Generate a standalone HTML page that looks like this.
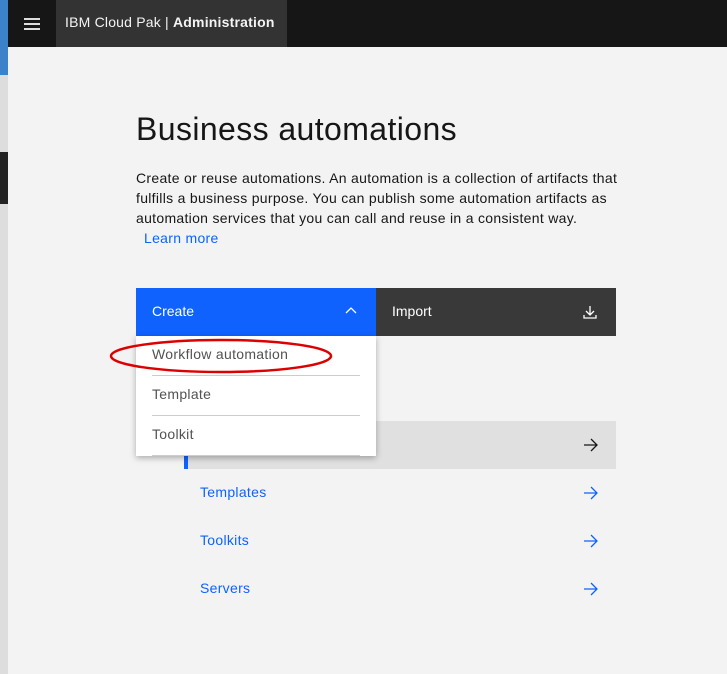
<html><head><style>
body{margin:0;width:727px;height:674px;overflow:hidden;background:#f3f3f3;font-family:"Liberation Sans",sans-serif;position:relative}
.a{position:absolute}
</style></head><body>
<div class="a" style="left:0;top:0;width:8px;height:674px;background:#ddd"></div>
<div class="a" style="left:0;top:0;width:8px;height:75px;background:#3b82c8"></div>
<div class="a" style="left:0;top:152px;width:8px;height:52px;background:#222"></div>
<div class="a" style="left:8px;top:0;width:719px;height:47px;background:#161616"></div>
<div class="a" style="left:56px;top:0;width:231px;height:47px;background:#333"></div>
<div class="a" style="left:24px;top:18px;width:16px;height:12px;border-top:2px solid #ddd;border-bottom:2px solid #ddd;box-sizing:border-box"></div>
<div class="a" style="left:24px;top:23px;width:16px;height:2px;background:#ddd"></div>
<div class="a" style="left:65px;top:14px;color:#f4f4f4;font-size:14px;letter-spacing:0.2px">IBM Cloud Pak | <b>Administration</b></div>
<div class="a" style="left:8px;top:47px;width:719px;height:627px;background:#f3f3f3"></div>
<div class="a" style="left:136px;top:111px;font-size:32px;color:#161616;letter-spacing:0.4px">Business automations</div>
<div class="a" style="left:136px;top:168px;width:490px;font-size:14px;line-height:20px;color:#161616;letter-spacing:0.3px">Create or reuse automations. An automation is a collection of artifacts that fulfills a business purpose. You can publish some automation artifacts as automation services that you can call and reuse in a consistent way.<br><span style="color:#0f62fe;margin-left:8px">Learn more</span></div>
<div class="a" style="left:136px;top:288px;width:240px;height:48px;background:#0f62fe;color:#fff;font-size:14px"><span class="a" style="left:16px;top:15px">Create</span><svg class="a" style="left:208px;top:18px" width="14" height="10"><path d="M2 7l5-5 5 5" stroke="#fff" fill="none" stroke-width="1.3"/></svg></div>
<div class="a" style="left:376px;top:288px;width:240px;height:48px;background:#393939;color:#fff;font-size:14px"><span class="a" style="left:16px;top:15px">Import</span><svg class="a" style="left:206px;top:16px" width="16" height="16"><path d="M8 2v9M4 7l4 4 4-4M2 11v3h12v-3" stroke="#fff" fill="none" stroke-width="1.3"/></svg></div>
<div class="a" style="left:184px;top:421px;width:432px;height:48px;background:#e0e0e0"></div>
<div class="a" style="left:184px;top:421px;width:4px;height:48px;background:#0f62fe"></div>
<svg class="a" style="left:583px;top:437px" width="16" height="16"><path d="M1 8h13M8 2l6 6-6 6" stroke="#161616" fill="none" stroke-width="1.3"/></svg>
<div class="a" style="left:200px;top:484px;font-size:14px;color:#0f62fe;letter-spacing:0.3px">Templates</div>
<div class="a" style="left:200px;top:532px;font-size:14px;color:#0f62fe;letter-spacing:0.3px">Toolkits</div>
<div class="a" style="left:200px;top:580px;font-size:14px;color:#0f62fe;letter-spacing:0.3px">Servers</div>
<svg class="a" style="left:583px;top:485px" width="16" height="16"><path d="M1 8h13M8 2l6 6-6 6" stroke="#0f62fe" fill="none" stroke-width="1.3"/></svg>
<svg class="a" style="left:583px;top:533px" width="16" height="16"><path d="M1 8h13M8 2l6 6-6 6" stroke="#0f62fe" fill="none" stroke-width="1.3"/></svg>
<svg class="a" style="left:583px;top:581px" width="16" height="16"><path d="M1 8h13M8 2l6 6-6 6" stroke="#0f62fe" fill="none" stroke-width="1.3"/></svg>
<div class="a" style="left:136px;top:336px;width:240px;height:120px;background:#fff;box-shadow:0 2px 6px rgba(0,0,0,.3);font-size:14px;color:#525252;letter-spacing:0.3px">
<div class="a" style="left:16px;top:10px">Workflow automation</div>
<div class="a" style="left:16px;top:39px;width:208px;height:1px;background:#ccc"></div>
<div class="a" style="left:16px;top:50px">Template</div>
<div class="a" style="left:16px;top:79px;width:208px;height:1px;background:#ccc"></div>
<div class="a" style="left:16px;top:90px">Toolkit</div>
<div class="a" style="left:16px;top:119px;width:208px;height:1px;background:#ccc"></div>
</div>
<svg class="a" style="left:108px;top:336px" width="228" height="42"><ellipse cx="113" cy="20" rx="110" ry="16" stroke="#d00" stroke-width="2.5" fill="none"/></svg>
</body></html>
